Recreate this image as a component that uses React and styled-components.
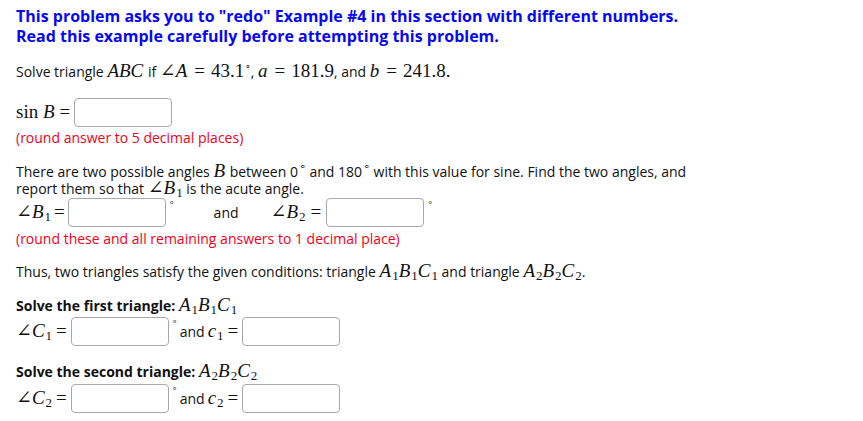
import React from 'react'
import styled, { createGlobalStyle } from 'styled-components'

const Global = createGlobalStyle`
  body {
    margin: 0;
    background: #fff;
    font-family: "Open Sans", "DejaVu Sans", sans-serif;
    font-size: 14px;
    color: #111;
  }
`;

const Page = styled.div`
  padding: 6px 16px;
`;

const Heading = styled.div`
  color: #0808f0;
  font-weight: bold;
  font-size: 16px;
  line-height: 20px;
  margin-bottom: 16px;
`;

const Para = styled.div`
  line-height: ${p => p.lh || 20}px;
  margin-top: ${p => p.mt || 0}px;
  font-weight: ${p => (p.bold ? 'bold' : 'normal')};
  white-space: nowrap;
`;

const Note = styled.div`
  color: #f00018;
  line-height: 18px;
  margin-top: ${p => p.mt || 0}px;
`;

const Math = styled.span`
  font-family: "Liberation Serif", "DejaVu Serif", serif;
  font-size: 19px;
  line-height: 0;
  white-space: nowrap;
  font-weight: normal;
`;

const Row = styled.div`
  display: flex;
  align-items: center;
  height: 30px;
  margin-top: ${p => p.mt || 0}px;

  ${Math} {
    line-height: 22px;
  }
`;

const V = styled.i`
  font-style: italic;
  margin-right: 1px;
`;

const Sub = styled.sub`
  font-size: 13px;
  font-style: normal;
  vertical-align: -3px;
  line-height: 0;
`;

const Sup = styled.sup`
  font-size: 11px;
  line-height: 0;
  vertical-align: 7px;
  margin-left: 1px;
`;

const Op = styled.span`
  margin: 0 ${p => p.m ?? 6}px;
`;

const Box = styled.span`
  display: inline-block;
  flex: none;
  box-sizing: border-box;
  width: 98px;
  height: 29px;
  border: 1px solid #a8a8a8;
  border-radius: 4px;
  background: #fff;
`;

const Deg = styled.span`
  font-size: 9px;
  line-height: 12px;
  align-self: flex-start;
  margin: 2px 0 0 4px;
`;

const Gap = styled.span`
  display: inline-block;
  flex: none;
  width: ${p => p.w}px;
`;

const Angle = ({ v, s, m = 4 }) => (
  <Math>
    ∠<V>{v}</V>
    {s && <Sub>{s}</Sub>}
    <Op m={m}>=</Op>
  </Math>
);

const Tri = ({ n }) => (
  <Math>
    <V>A</V><Sub>{n}</Sub><V>B</V><Sub>{n}</Sub><V>C</V><Sub>{n}</Sub>
  </Math>
);

const SolveRow = ({ n, mt }) => (
  <Row mt={mt}>
    <Angle v="C" s={n} />
    <Box />
    <Deg>°</Deg>
    <Gap w={3} />
    <span>and</span>
    <Math>
      <Gap w={3} />
      <V>c</V><Sub>{n}</Sub>
      <Op m={4}>=</Op>
    </Math>
    <Box />
  </Row>
);

export default function App() {
  return (
    <Page>
      <Global />
      <Heading>
        This problem asks you to "redo" Example #4 in this section with different numbers.
        <br />
        Read this example carefully before attempting this problem.
      </Heading>

      <Para>
        Solve triangle <Math><V>ABC</V></Math> if{' '}
        <Math>∠<V>A</V><Op>=</Op>43.1<Sup>∘</Sup></Math>,{' '}
        <Math><V>a</V><Op>=</Op>181.9</Math>, and{' '}
        <Math><V>b</V><Op>=</Op>241.8.</Math>
      </Para>

      <Row mt={15}>
        <Math>sin <V>B</V><Op m={4}>=</Op></Math>
        <Box />
      </Row>
      <Note mt={2}>(round answer to 5 decimal places)</Note>

      <Para lh={17} mt={16}>
        There are two possible angles <Math><V>B</V></Math> between 0<Sup>∘</Sup> and 180<Sup>∘</Sup> with this value for sine. Find the two angles, and
        <br />
        report them so that <Math>∠<V>B</V><Sub>1</Sub></Math> is the acute angle.
      </Para>
      <Row>
        <Angle v="B" s="1" m={3} />
        <Box />
        <Deg>°</Deg>
        <Gap w={40} />
        <span>and</span>
        <Gap w={32} />
        <Angle v="B" s="2" m={5} />
        <Box />
        <Deg>°</Deg>
      </Row>
      <Note mt={3}>(round these and all remaining answers to 1 decimal place)</Note>

      <Para mt={14}>
        Thus, two triangles satisfy the given conditions: triangle <Tri n="1" /> and triangle <Tri n="2" />.
      </Para>

      <Para bold mt={14}>Solve the first triangle: <Tri n="1" /></Para>
      <SolveRow n="1" />
      <Para bold mt={16}>Solve the second triangle: <Tri n="2" /></Para>
      <SolveRow n="2" mt={1} />
    </Page>
  );
}
